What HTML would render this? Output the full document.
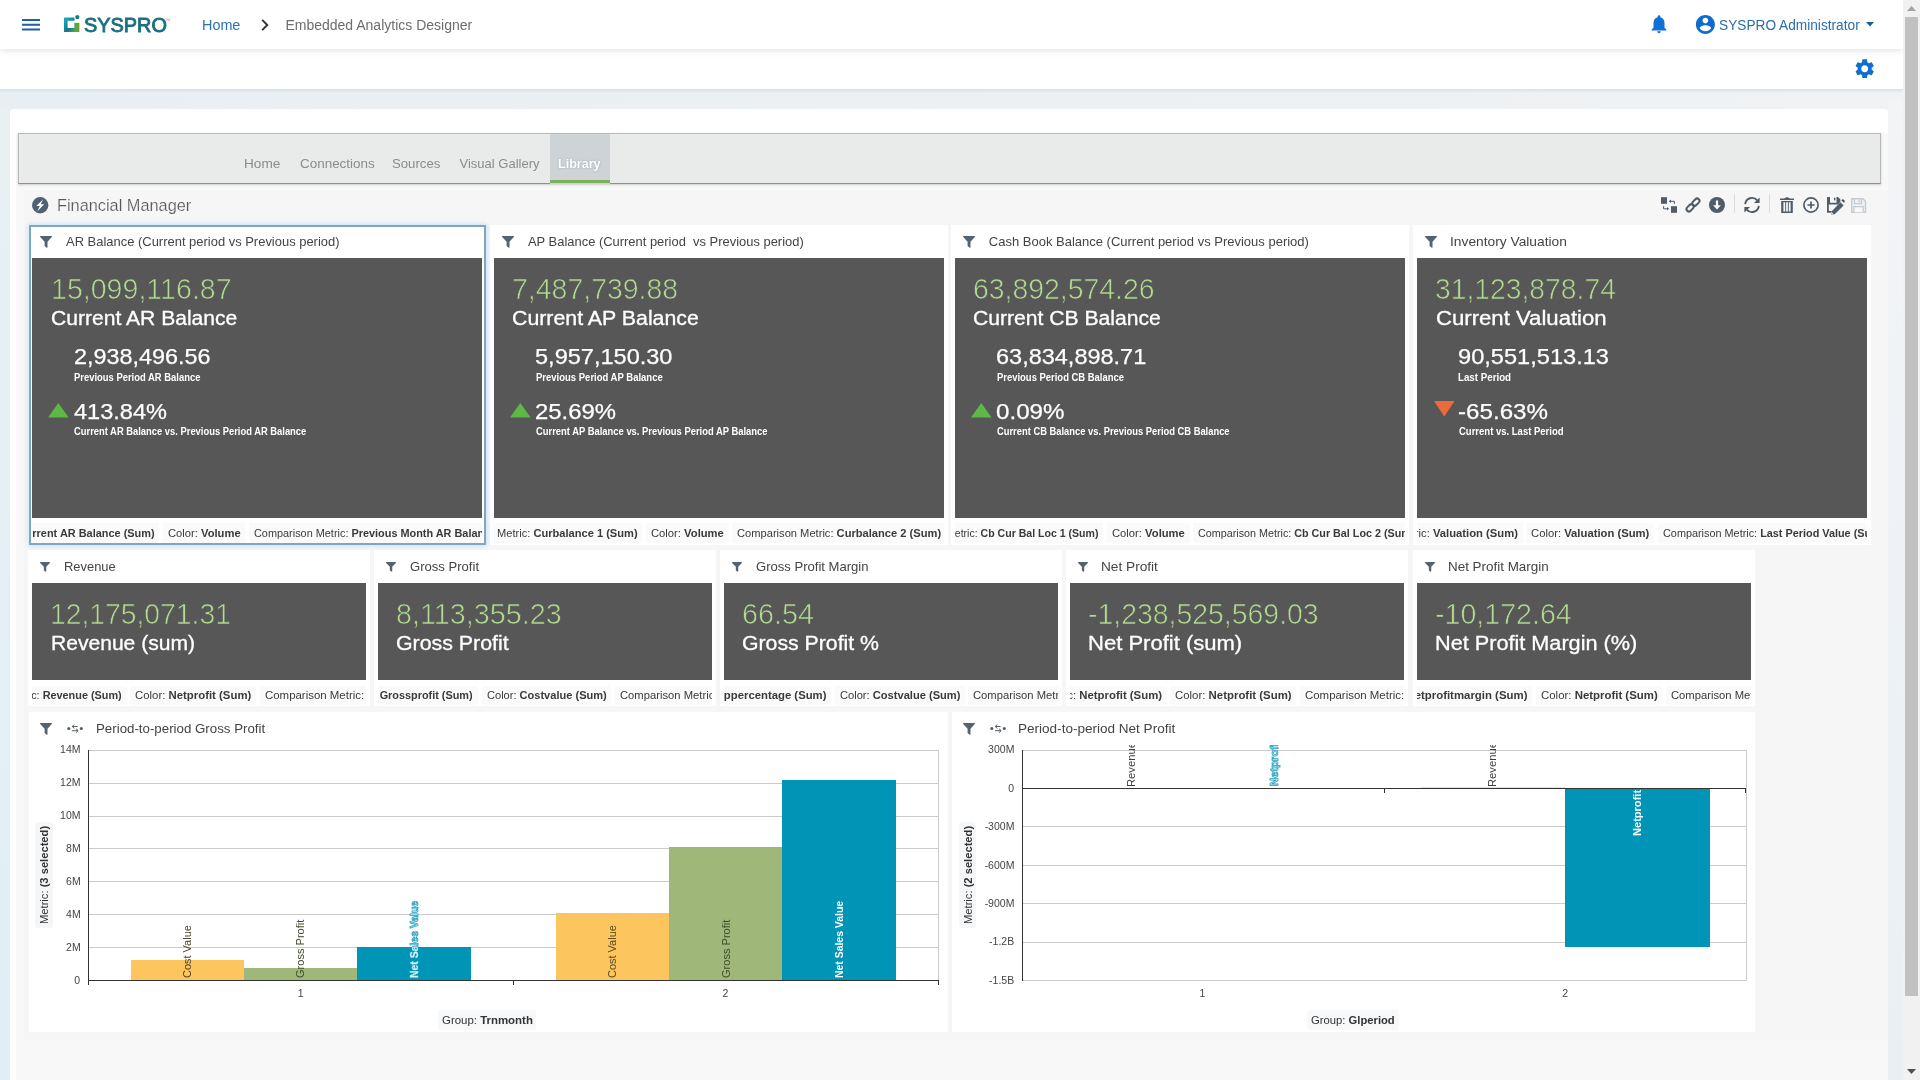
<!DOCTYPE html>
<html><head><meta charset="utf-8"><title>Embedded Analytics Designer</title>
<style>
html,body{margin:0;padding:0}
body{width:1920px;height:1080px;overflow:hidden;position:relative;font-family:"Liberation Sans", sans-serif;background:#e6eff4}
svg{position:absolute;overflow:visible}
</style></head>
<body>
<div style="position:absolute;left:0;top:0;width:1920px;height:1080px;will-change:transform">
<div style="position:absolute;left:0;top:0;width:1903px;height:1080px;background:linear-gradient(180deg,#e8f0f4 0px,#e8f0f4 120px,#e0eff5 1000px)"></div>
<div style="position:absolute;left:0;top:89px;width:1903px;height:21px;background:linear-gradient(90deg,#e8eff4 0,#ecf0f2 900px,#f0f2f4 1903px)"></div>
<div style="position:absolute;left:1888px;top:100px;width:15px;height:980px;background:linear-gradient(180deg,#f2f4f6 0,#f1f3f6 150px,#e9f0f5 980px)"></div>
<div style="position:absolute;left:0px;top:49px;width:1903px;height:40px;background:#ffffff;"></div>
<div style="position:absolute;left:0;top:89px;width:1903px;height:4px;background:linear-gradient(180deg,rgba(120,135,150,0.16),rgba(120,135,150,0))"></div>
<div style="position:absolute;left:0px;top:0px;width:1903px;height:49px;background:#ffffff;box-shadow:0 1px 8px rgba(0,0,0,0.13);"></div>
<div style="position:absolute;left:10px;top:109px;width:1878px;height:980px;background:#ffffff;border-radius:3px;"></div>
<div style="position:absolute;left:16px;top:133px;width:1872px;height:947px;background:#f8f8f8;"></div>
<div style="position:absolute;left:24px;top:190px;width:1864px;height:850px;background:#f6f6f6;"></div>
<div style="position:absolute;left:1903px;top:0px;width:17px;height:1080px;background:#f1f1f1;"></div>
<div style="position:absolute;left:1905px;top:17px;width:13px;height:979px;background:#c1c1c1;"></div>
<svg style="left:1907px;top:6px" width="9" height="5" viewBox="0 0 9 5"><path d="M4.5 0 L9 5 H0 Z" fill="#a3a3a3"/></svg>
<svg style="left:1907px;top:1069px" width="9" height="5" viewBox="0 0 9 5"><path d="M0 0 H9 L4.5 5 Z" fill="#505050"/></svg>
<svg style="left:22px;top:19px" width="18" height="12" viewBox="0 0 18 12"><path d="M0 0h18v2H0zM0 4.7h18v2H0zM0 9.4h18v2H0z" fill="#1f5fa3"/></svg>
<svg style="left:64px;top:15px" width="16" height="17" viewBox="0 0 16 17">
<defs><linearGradient id="lg1" x1="0" y1="0" x2="1" y2="1"><stop offset="0" stop-color="#1fb0c4"/><stop offset="0.55" stop-color="#14788e"/><stop offset="1" stop-color="#7ab83a"/></linearGradient></defs>
<path d="M0 2.5h10.5v3.2H3.6v7.2h7v-5h4.6V17H0z" fill="url(#lg1)"/>
<rect x="10.6" y="7.9" width="4.6" height="9.1" fill="#5fa53c"/>
<rect x="11.5" y="0.3" width="3.7" height="3.7" rx="1" fill="#167a80"/>
</svg>
<span style="position:absolute;white-space:pre;left:84.24px;top:13.82px;font-size:21px;font-weight:400;line-height:1;color:#1b6f80;transform:scaleX(0.9473);transform-origin:0 0;-webkit-text-stroke:0.9px #1b6f80;">SYSPRO</span>
<span style="position:absolute;white-space:pre;left:165.33px;top:18.27px;font-size:5px;font-weight:400;line-height:1;color:#888;">™</span>
<span style="position:absolute;white-space:pre;left:202.09px;top:17.85px;font-size:14px;font-weight:400;line-height:1;color:#2e72ad;transform:scaleX(1.0271);transform-origin:0 0;">Home</span>
<svg style="left:260.5px;top:19px" width="8" height="12" viewBox="0 0 8 12"><path d="M1.2 0.8 L6.3 6 L1.2 11.2" fill="none" stroke="#333" stroke-width="1.9"/></svg>
<span style="position:absolute;white-space:pre;left:285.42px;top:17.85px;font-size:14px;font-weight:400;line-height:1;color:#6e6e6e;">Embedded Analytics Designer</span>
<svg style="left:1647.5px;top:13.2px" width="22" height="22" viewBox="0 0 24 24"><path fill="#1070d6" d="M12 22c1.1 0 2-.9 2-2h-4c0 1.1.89 2 2 2zm6-6v-5c0-3.07-1.64-5.64-4.5-6.32V4c0-.83-.67-1.5-1.5-1.5s-1.5.67-1.5 1.5v.68C7.63 5.36 6 7.92 6 11v5l-2 2v1h16v-1l-2-2z"/></svg>
<svg style="left:1693.6px;top:12.9px" width="22.8" height="22.8" viewBox="0 0 24 24"><path fill="#0f6ccc" d="M12 2C6.48 2 2 6.48 2 12s4.48 10 10 10 10-4.48 10-10S17.52 2 12 2zm0 3c1.66 0 3 1.34 3 3s-1.34 3-3 3-3-1.34-3-3 1.34-3 3-3zm0 14.2c-2.5 0-4.71-1.28-6-3.22.03-1.99 4-3.08 6-3.08 1.99 0 5.97 1.09 6 3.08-1.29 1.94-3.5 3.22-6 3.22z"/></svg>
<span style="position:absolute;white-space:pre;left:1718.57px;top:17.85px;font-size:14px;font-weight:400;line-height:1;color:#2a6daf;transform:scaleX(0.9774);transform-origin:0 0;">SYSPRO Administrator</span>
<svg style="left:1866px;top:22px" width="8" height="4.4" viewBox="0 0 8 4.4"><path d="M0 0H8L4 4.4Z" fill="#1a5c8a"/></svg>
<svg style="left:1852.6px;top:56.7px" width="23.4" height="23.4" viewBox="0 0 24 24"><path fill="#0e6fd0" d="M19.14 12.94c.04-.3.06-.61.06-.94 0-.32-.02-.64-.07-.94l2.03-1.58c.18-.14.23-.41.12-.61l-1.92-3.32c-.12-.22-.37-.29-.59-.22l-2.39.96c-.5-.38-1.03-.7-1.62-.94l-.36-2.54c-.04-.24-.24-.41-.48-.41h-3.84c-.24 0-.43.17-.47.41l-.36 2.54c-.59.24-1.13.57-1.62.94l-2.39-.96c-.22-.08-.47 0-.59.22L2.74 8.87c-.12.21-.08.47.12.61l2.03 1.58c-.05.3-.09.63-.09.94s.02.64.07.94l-2.03 1.58c-.18.14-.23.41-.12.61l1.92 3.32c.12.22.37.29.59.22l2.39-.96c.5.38 1.03.7 1.62.94l.36 2.54c.05.24.24.41.48.41h3.84c.24 0 .44-.17.47-.41l.36-2.54c.59-.24 1.13-.56 1.62-.94l2.39.96c.22.08.47 0 .59-.22l1.92-3.32c.12-.22.07-.47-.12-.61l-2.01-1.58zM12 15.6c-1.98 0-3.6-1.62-3.6-3.6s1.62-3.6 3.6-3.6 3.6 1.62 3.6 3.6-1.62 3.6-3.6 3.6z"/></svg>
<div style="position:absolute;left:18px;top:133px;width:1863px;height:51px;background:#e9eaea;box-sizing:border-box;border:1px solid #b9b9b9;border-bottom:1px solid #8f8f8f;box-shadow:0 1px 2px rgba(0,0,0,0.18);"></div>
<div style="position:absolute;left:549.5px;top:134px;width:60px;height:49.5px;background:#cdd3d7;"></div>
<div style="position:absolute;left:549.5px;top:180px;width:60px;height:3.4px;background:#7fb05c;"></div>
<span style="position:absolute;white-space:pre;left:244.37px;top:156.50px;font-size:13px;font-weight:400;line-height:1;color:#8b8b8b;transform:scaleX(1.0479);transform-origin:0 0;">Home</span>
<span style="position:absolute;white-space:pre;left:299.68px;top:156.50px;font-size:13px;font-weight:400;line-height:1;color:#8b8b8b;transform:scaleX(1.0340);transform-origin:0 0;">Connections</span>
<span style="position:absolute;white-space:pre;left:392.44px;top:156.50px;font-size:13px;font-weight:400;line-height:1;color:#8b8b8b;transform:scaleX(1.0131);transform-origin:0 0;">Sources</span>
<span style="position:absolute;white-space:pre;left:459.52px;top:156.50px;font-size:13px;font-weight:400;line-height:1;color:#8b8b8b;">Visual Gallery</span>
<span style="position:absolute;white-space:pre;left:558.24px;top:156.50px;font-size:13px;font-weight:700;line-height:1;color:#ffffff;transform:scaleX(0.9647);transform-origin:0 0;text-shadow:0 0 2px rgba(120,130,140,0.6);">Library</span>
<svg style="left:31.8px;top:197px" width="16.4" height="16.4" viewBox="0 0 16 16"><circle cx="8" cy="8" r="8" fill="#4f6172"/><path d="M10.9 2.2 L4.3 8.8 H7.6 L5.3 14 L11.9 7.1 H8.6 Z" fill="#fff"/></svg>
<span style="position:absolute;white-space:pre;left:56.85px;top:196.91px;font-size:17px;font-weight:400;line-height:1;color:#585858;transform:scaleX(0.9601);transform-origin:0 0;-webkit-text-stroke:0.2px #f6f6f6;">Financial Manager</span>
<svg style="left:1661px;top:197px" width="16" height="16" viewBox="0 0 16 16">
<rect x="0" y="0.2" width="6" height="6.6" fill="#505c68"/><rect x="10" y="9.2" width="6" height="6.6" fill="#505c68"/>
<path d="M8.2 4.3 H13.3 V7" fill="none" stroke="#505c68" stroke-width="1"/><path d="M10 2.6 L8 4.3 L10 6 Z" fill="#505c68"/>
<path d="M2.6 9.2 V11.8 H6.5" fill="none" stroke="#505c68" stroke-width="1"/><path d="M6 10.1 L8 11.8 L6 13.5 Z" fill="#505c68"/>
</svg>
<svg style="left:1685px;top:197px" width="16" height="16" viewBox="0 0 16 16">
<g fill="none" stroke="#505c68" stroke-width="2" stroke-linecap="round">
<rect x="-2.4" y="-4.1" width="4.8" height="8.2" rx="2.4" transform="translate(10.9 5.1) rotate(45)"/>
<rect x="-2.4" y="-4.1" width="4.8" height="8.2" rx="2.4" transform="translate(5.1 10.9) rotate(45)"/>
</g></svg>
<svg style="left:1709.2px;top:196.9px" width="16" height="16" viewBox="0 0 16 16">
<circle cx="8" cy="8" r="8" fill="#505c68"/><path d="M6.9 3.4 H9.1 V8.2 H11.9 L8 12.6 L4.1 8.2 H6.9 Z" fill="#fff"/></svg>
<div style="position:absolute;left:1734px;top:193.5px;width:1px;height:19.5px;background:#dcdcdc;"></div>
<svg style="left:1744px;top:197px" width="16" height="16" viewBox="0 0 16 16">
<g fill="none" stroke="#505c68" stroke-width="1.9">
<path d="M1.2 7.2 A6.8 6.8 0 0 1 13.2 3.4"/><path d="M14.8 8.8 A6.8 6.8 0 0 1 2.8 12.6"/></g>
<path d="M15.6 0.4 V6 H10 Z" fill="#505c68"/><path d="M0.4 15.6 V10 H6 Z" fill="#505c68"/></svg>
<div style="position:absolute;left:1769px;top:193.5px;width:1px;height:19.5px;background:#dcdcdc;"></div>
<svg style="left:1780px;top:196.9px" width="14" height="16" viewBox="0 0 14 16">
<path d="M4.6 0.9 Q7 -0.4 9.4 0.9 V1.5 H14 V3 H0 V1.5 H4.6 Z" fill="#505c68"/>
<path d="M1.2 4 H12.8 V16 H1.2 Z M3.4 5.2 V14.4 H5.2 V5.2 Z M6.1 5.2 V14.4 H7.9 V5.2 Z M8.8 5.2 V14.4 H10.6 V5.2 Z" fill="#505c68" fill-rule="evenodd"/></svg>
<svg style="left:1803px;top:196.9px" width="16" height="16" viewBox="0 0 16 16">
<circle cx="8" cy="8" r="7.1" fill="none" stroke="#505c68" stroke-width="1.7"/><path d="M4.4 8 H11.6 M8 4.4 V11.6" stroke="#505c68" stroke-width="1.7"/></svg>
<svg style="left:1827.2px;top:197px" width="18" height="18" viewBox="0 0 18 18">
<path d="M0 0 H3 V5.8 H9.5 V0 H11 L13.3 2.3 V5 L11.6 6.7 V7.4 H1.8 V14 H5.2 L3.8 15.7 H0 Z" fill="#505c68"/>
<rect x="7" y="0.8" width="1.4" height="2.6" fill="#505c68"/>
<path d="M13.4 5.2 L16.6 8.4 L8 17 L4.2 18 L5 14 Z" fill="#505c68"/><path d="M14.2 3.6 L15.2 2.6 Q15.9 2 16.6 2.6 L17.6 3.6 Q18.2 4.4 17.6 5.1 L16.9 5.8 Z" fill="#505c68"/>
<path d="M4.4 17.8 L4.9 15.6 L6.5 17.2 Z" fill="#fff"/></svg>
<svg style="left:1851.2px;top:197.6px" width="15.2" height="15" viewBox="0 0 15.2 15">
<path d="M0.7 0.7 H11.9 L14.5 3.3 V14.3 H0.7 Z" fill="#eff1f3" stroke="#c6cbd0" stroke-width="1.4"/>
<path d="M3.4 0.7 V5.6 H10.6 V0.7" fill="none" stroke="#c6cbd0" stroke-width="1.2"/>
<rect x="7.6" y="1.6" width="1.6" height="2.6" fill="#c6cbd0"/>
<path d="M2.9 14.3 V8.6 H12.3 V14.3" fill="#f6f7f8" stroke="#c6cbd0" stroke-width="1.2"/></svg>
<div style="position:absolute;left:27.700000000000003px;top:225px;width:458.2px;height:319.5px;background:#ffffff;"></div>
<div style="position:absolute;left:29px;top:225px;width:457px;height:319.5px;background:#ffffff;box-sizing:border-box;border:2px solid #7ea8c1;box-shadow:0 0 4px 1px rgba(170,210,245,0.6);"></div>
<div style="position:absolute;left:32.1px;top:258px;width:449.5px;height:259.6px;background:#575757;"></div>
<svg style="left:40.0px;top:235.8px" width="12" height="12" viewBox="0 0 12 12"><path d="M0.4 0 H11.6 Q12.3 0.5 11.8 1.1 L7.5 5.8 V10.9 Q7.3 12.2 6.4 11.5 L4.6 10.1 V5.8 L0.2 1.1 Q-0.3 0.5 0.4 0 Z" fill="#546370"/></svg>
<span style="position:absolute;white-space:pre;left:66.05px;top:234.80px;font-size:13px;font-weight:400;line-height:1;color:#444;transform:scaleX(0.9962);transform-origin:0 0;">AR Balance (Current period vs Previous period)</span>
<span style="position:absolute;white-space:pre;left:50.56px;top:273.61px;font-size:30px;font-weight:400;line-height:1;color:#b1db90;transform:scaleX(0.9526);transform-origin:0 0;-webkit-text-stroke:0.7px #575757;">15,099,116.87</span>
<span style="position:absolute;white-space:pre;left:50.63px;top:309.09px;font-size:19.5px;font-weight:400;line-height:1;color:#fff;transform:scaleX(1.0811);transform-origin:0 0;-webkit-text-stroke:0.3px #fff;">Current AR Balance</span>
<span style="position:absolute;white-space:pre;left:73.60px;top:346.47px;font-size:22.6px;font-weight:400;line-height:1;color:#fff;transform:scaleX(1.0356);transform-origin:0 0;-webkit-text-stroke:0.25px #fff;">2,938,496.56</span>
<span style="position:absolute;white-space:pre;left:73.96px;top:373.14px;font-size:10px;font-weight:700;line-height:1;color:#fff;transform:scaleX(0.9424);transform-origin:0 0;">Previous Period AR Balance</span>
<span style="position:absolute;white-space:pre;left:74.25px;top:400.67px;font-size:22.6px;font-weight:400;line-height:1;color:#fff;transform:scaleX(1.0426);transform-origin:0 0;-webkit-text-stroke:0.25px #fff;">413.84%</span>
<span style="position:absolute;white-space:pre;left:74.15px;top:427.24px;font-size:10px;font-weight:700;line-height:1;color:#fff;transform:scaleX(0.9378);transform-origin:0 0;">Current AR Balance vs. Previous Period AR Balance</span>
<svg style="left:48.1px;top:402.5px" width="20.6" height="14.4" viewBox="0 0 20.6 14.4"><path d="M10.3 0 L20.6 14.4 H0 Z" fill="#5db846"/></svg>
<div style="position:absolute;left:489.70000000000005px;top:225px;width:458.2px;height:319.5px;background:#ffffff;"></div>
<div style="position:absolute;left:494.1px;top:258px;width:449.5px;height:259.6px;background:#575757;"></div>
<svg style="left:502.0px;top:235.8px" width="12" height="12" viewBox="0 0 12 12"><path d="M0.4 0 H11.6 Q12.3 0.5 11.8 1.1 L7.5 5.8 V10.9 Q7.3 12.2 6.4 11.5 L4.6 10.1 V5.8 L0.2 1.1 Q-0.3 0.5 0.4 0 Z" fill="#546370"/></svg>
<span style="position:absolute;white-space:pre;left:528.05px;top:234.80px;font-size:13px;font-weight:400;line-height:1;color:#444;transform:scaleX(0.9945);transform-origin:0 0;">AP Balance (Current period  vs Previous period)</span>
<span style="position:absolute;white-space:pre;left:512.14px;top:273.61px;font-size:30px;font-weight:400;line-height:1;color:#b1db90;transform:scaleX(0.9487);transform-origin:0 0;-webkit-text-stroke:0.7px #575757;">7,487,739.88</span>
<span style="position:absolute;white-space:pre;left:512.07px;top:309.09px;font-size:19.5px;font-weight:400;line-height:1;color:#fff;transform:scaleX(1.0932);transform-origin:0 0;-webkit-text-stroke:0.3px #fff;">Current AP Balance</span>
<span style="position:absolute;white-space:pre;left:535.23px;top:346.47px;font-size:22.6px;font-weight:400;line-height:1;color:#fff;transform:scaleX(1.0419);transform-origin:0 0;-webkit-text-stroke:0.25px #fff;">5,957,150.30</span>
<span style="position:absolute;white-space:pre;left:535.76px;top:373.14px;font-size:10px;font-weight:700;line-height:1;color:#fff;transform:scaleX(0.9500);transform-origin:0 0;">Previous Period AP Balance</span>
<span style="position:absolute;white-space:pre;left:535.37px;top:400.67px;font-size:22.6px;font-weight:400;line-height:1;color:#fff;transform:scaleX(1.0570);transform-origin:0 0;-webkit-text-stroke:0.25px #fff;">25.69%</span>
<span style="position:absolute;white-space:pre;left:535.95px;top:427.24px;font-size:10px;font-weight:700;line-height:1;color:#fff;transform:scaleX(0.9401);transform-origin:0 0;">Current AP Balance vs. Previous Period AP Balance</span>
<svg style="left:510.1px;top:402.5px" width="20.6" height="14.4" viewBox="0 0 20.6 14.4"><path d="M10.3 0 L20.6 14.4 H0 Z" fill="#5db846"/></svg>
<div style="position:absolute;left:950.8000000000001px;top:225px;width:458.2px;height:319.5px;background:#ffffff;"></div>
<div style="position:absolute;left:955.2px;top:258px;width:449.5px;height:259.6px;background:#575757;"></div>
<svg style="left:963.1px;top:235.8px" width="12" height="12" viewBox="0 0 12 12"><path d="M0.4 0 H11.6 Q12.3 0.5 11.8 1.1 L7.5 5.8 V10.9 Q7.3 12.2 6.4 11.5 L4.6 10.1 V5.8 L0.2 1.1 Q-0.3 0.5 0.4 0 Z" fill="#546370"/></svg>
<span style="position:absolute;white-space:pre;left:988.80px;top:234.80px;font-size:13px;font-weight:400;line-height:1;color:#444;">Cash Book Balance (Current period vs Previous period)</span>
<span style="position:absolute;white-space:pre;left:973.02px;top:273.61px;font-size:30px;font-weight:400;line-height:1;color:#b1db90;transform:scaleX(0.9461);transform-origin:0 0;-webkit-text-stroke:0.7px #575757;">63,892,574.26</span>
<span style="position:absolute;white-space:pre;left:973.38px;top:309.09px;font-size:19.5px;font-weight:400;line-height:1;color:#fff;transform:scaleX(1.0824);transform-origin:0 0;-webkit-text-stroke:0.3px #fff;">Current CB Balance</span>
<span style="position:absolute;white-space:pre;left:996.25px;top:346.47px;font-size:22.6px;font-weight:400;line-height:1;color:#fff;transform:scaleX(1.0397);transform-origin:0 0;-webkit-text-stroke:0.25px #fff;">63,834,898.71</span>
<span style="position:absolute;white-space:pre;left:996.66px;top:373.14px;font-size:10px;font-weight:700;line-height:1;color:#fff;transform:scaleX(0.9443);transform-origin:0 0;">Previous Period CB Balance</span>
<span style="position:absolute;white-space:pre;left:996.43px;top:400.67px;font-size:22.6px;font-weight:400;line-height:1;color:#fff;transform:scaleX(1.0694);transform-origin:0 0;-webkit-text-stroke:0.25px #fff;">0.09%</span>
<span style="position:absolute;white-space:pre;left:996.85px;top:427.24px;font-size:10px;font-weight:700;line-height:1;color:#fff;transform:scaleX(0.9361);transform-origin:0 0;">Current CB Balance vs. Previous Period CB Balance</span>
<svg style="left:971.2px;top:402.5px" width="20.6" height="14.4" viewBox="0 0 20.6 14.4"><path d="M10.3 0 L20.6 14.4 H0 Z" fill="#5db846"/></svg>
<div style="position:absolute;left:1412.6px;top:225px;width:458.2px;height:319.5px;background:#ffffff;"></div>
<div style="position:absolute;left:1417.0px;top:258px;width:449.5px;height:259.6px;background:#575757;"></div>
<svg style="left:1424.9px;top:235.8px" width="12" height="12" viewBox="0 0 12 12"><path d="M0.4 0 H11.6 Q12.3 0.5 11.8 1.1 L7.5 5.8 V10.9 Q7.3 12.2 6.4 11.5 L4.6 10.1 V5.8 L0.2 1.1 Q-0.3 0.5 0.4 0 Z" fill="#546370"/></svg>
<span style="position:absolute;white-space:pre;left:1450.00px;top:234.80px;font-size:13px;font-weight:400;line-height:1;color:#444;transform:scaleX(1.0596);transform-origin:0 0;">Inventory Valuation</span>
<span style="position:absolute;white-space:pre;left:1435.32px;top:273.61px;font-size:30px;font-weight:400;line-height:1;color:#b1db90;transform:scaleX(0.9428);transform-origin:0 0;-webkit-text-stroke:0.7px #575757;">31,123,878.74</span>
<span style="position:absolute;white-space:pre;left:1435.52px;top:309.09px;font-size:19.5px;font-weight:400;line-height:1;color:#fff;transform:scaleX(1.1354);transform-origin:0 0;-webkit-text-stroke:0.3px #fff;">Current Valuation</span>
<span style="position:absolute;white-space:pre;left:1458.11px;top:346.47px;font-size:22.6px;font-weight:400;line-height:1;color:#fff;transform:scaleX(1.0451);transform-origin:0 0;-webkit-text-stroke:0.25px #fff;">90,551,513.13</span>
<span style="position:absolute;white-space:pre;left:1458.44px;top:373.14px;font-size:10px;font-weight:700;line-height:1;color:#fff;transform:scaleX(0.9740);transform-origin:0 0;">Last Period</span>
<span style="position:absolute;white-space:pre;left:1458.23px;top:400.67px;font-size:22.6px;font-weight:400;line-height:1;color:#fff;transform:scaleX(1.0695);transform-origin:0 0;-webkit-text-stroke:0.25px #fff;">-65.63%</span>
<span style="position:absolute;white-space:pre;left:1458.65px;top:427.24px;font-size:10px;font-weight:700;line-height:1;color:#fff;transform:scaleX(0.9501);transform-origin:0 0;">Current vs. Last Period</span>
<svg style="left:1433.75px;top:400.6px" width="20.6" height="15.4" viewBox="0 0 20.6 15.4"><path d="M0 0 H20.6 L10.3 15.4 Z" fill="#ee6a3c"/></svg>
<div style="position:absolute;left:32.1px;top:522.9px;width:449.5px;height:22px;overflow:hidden">
<div style="position:absolute;left:-55.5px;top:0.5px;width:182.9px;height:19.5px;background:#fafafa;border-radius:2px"></div>
<span style="position:absolute;white-space:pre;left:-50.21px;top:4.69px;font-size:11px;font-weight:400;line-height:1;color:#3a3a3a;transform:scaleX(0.9930);transform-origin:0 0;">Metric: <b>Current AR Balance (Sum)</b></span>
<div style="position:absolute;left:130.8px;top:0.5px;width:82.6px;height:19.5px;background:#fafafa;border-radius:2px"></div>
<span style="position:absolute;white-space:pre;left:135.67px;top:4.69px;font-size:11px;font-weight:400;line-height:1;color:#3a3a3a;transform:scaleX(1.0187);transform-origin:0 0;">Color: <b>Volume</b></span>
<div style="position:absolute;left:217.0px;top:0.5px;width:288.0px;height:19.5px;background:#fafafa;border-radius:2px"></div>
<span style="position:absolute;white-space:pre;left:221.89px;top:4.69px;font-size:11px;font-weight:400;line-height:1;color:#3a3a3a;transform:scaleX(0.9900);transform-origin:0 0;">Comparison Metric: <b>Previous Month AR Balance (Sum)</b></span>
</div>
<div style="position:absolute;left:494.1px;top:522.9px;width:449.5px;height:22px;overflow:hidden">
<div style="position:absolute;left:-1.9px;top:0.5px;width:150.0px;height:19.5px;background:#fafafa;border-radius:2px"></div>
<span style="position:absolute;white-space:pre;left:2.59px;top:4.69px;font-size:11px;font-weight:400;line-height:1;color:#3a3a3a;transform:scaleX(1.0087);transform-origin:0 0;">Metric: <b>Curbalance 1 (Sum)</b></span>
<div style="position:absolute;left:152.1px;top:0.5px;width:82.8px;height:19.5px;background:#fafafa;border-radius:2px"></div>
<span style="position:absolute;white-space:pre;left:156.97px;top:4.69px;font-size:11px;font-weight:400;line-height:1;color:#3a3a3a;transform:scaleX(1.0216);transform-origin:0 0;">Color: <b>Volume</b></span>
<div style="position:absolute;left:238.0px;top:0.5px;width:213.8px;height:19.5px;background:#fafafa;border-radius:2px"></div>
<span style="position:absolute;white-space:pre;left:242.88px;top:4.69px;font-size:11px;font-weight:400;line-height:1;color:#3a3a3a;transform:scaleX(1.0121);transform-origin:0 0;">Comparison Metric: <b>Curbalance 2 (Sum)</b></span>
</div>
<div style="position:absolute;left:955.2px;top:522.9px;width:449.5px;height:22px;overflow:hidden">
<div style="position:absolute;left:-55.5px;top:0.5px;width:203.8px;height:19.5px;background:#fafafa;border-radius:2px"></div>
<span style="position:absolute;white-space:pre;left:-9.03px;top:4.69px;font-size:11px;font-weight:400;line-height:1;color:#3a3a3a;transform:scaleX(0.9590);transform-origin:0 0;">Metric: <b>Cb Cur Bal Loc 1 (Sum)</b></span>
<div style="position:absolute;left:151.9px;top:0.5px;width:82.8px;height:19.5px;background:#fafafa;border-radius:2px"></div>
<span style="position:absolute;white-space:pre;left:156.77px;top:4.69px;font-size:11px;font-weight:400;line-height:1;color:#3a3a3a;transform:scaleX(1.0216);transform-origin:0 0;">Color: <b>Volume</b></span>
<div style="position:absolute;left:238.1px;top:0.5px;width:266.9px;height:19.5px;background:#fafafa;border-radius:2px"></div>
<span style="position:absolute;white-space:pre;left:243.00px;top:4.69px;font-size:11px;font-weight:400;line-height:1;color:#3a3a3a;transform:scaleX(0.9780);transform-origin:0 0;">Comparison Metric: <b>Cb Cur Bal Loc 2 (Sum)</b></span>
</div>
<div style="position:absolute;left:1417.0px;top:522.9px;width:449.5px;height:22px;overflow:hidden">
<div style="position:absolute;left:-55.5px;top:0.5px;width:161.0px;height:19.5px;background:#fafafa;border-radius:2px"></div>
<span style="position:absolute;white-space:pre;left:-21.29px;top:4.69px;font-size:11px;font-weight:400;line-height:1;color:#3a3a3a;transform:scaleX(1.0230);transform-origin:0 0;">Metric: <b>Valuation (Sum)</b></span>
<div style="position:absolute;left:108.9px;top:0.5px;width:128.0px;height:19.5px;background:#fafafa;border-radius:2px"></div>
<span style="position:absolute;white-space:pre;left:113.77px;top:4.69px;font-size:11px;font-weight:400;line-height:1;color:#3a3a3a;transform:scaleX(1.0246);transform-origin:0 0;">Color: <b>Valuation (Sum)</b></span>
<div style="position:absolute;left:240.9px;top:0.5px;width:264.1px;height:19.5px;background:#fafafa;border-radius:2px"></div>
<span style="position:absolute;white-space:pre;left:245.79px;top:4.69px;font-size:11px;font-weight:400;line-height:1;color:#3a3a3a;transform:scaleX(0.9870);transform-origin:0 0;">Comparison Metric: <b>Last Period Value (Sum)</b></span>
</div>
<div style="position:absolute;left:27.700000000000003px;top:550px;width:342.2px;height:156px;background:#ffffff;"></div>
<div style="position:absolute;left:32.1px;top:583.2px;width:333.9px;height:96.6px;background:#575757;"></div>
<svg style="left:40.0px;top:562px" width="10" height="10" viewBox="0 0 12 12"><path d="M0.4 0 H11.6 Q12.3 0.5 11.8 1.1 L7.5 5.8 V10.9 Q7.3 12.2 6.4 11.5 L4.6 10.1 V5.8 L0.2 1.1 Q-0.3 0.5 0.4 0 Z" fill="#546370"/></svg>
<span style="position:absolute;white-space:pre;left:63.53px;top:559.60px;font-size:13px;font-weight:400;line-height:1;color:#444;transform:scaleX(0.9944);transform-origin:0 0;">Revenue</span>
<span style="position:absolute;white-space:pre;left:50.03px;top:598.50px;font-size:30px;font-weight:400;line-height:1;color:#b1db90;transform:scaleX(0.9428);transform-origin:0 0;-webkit-text-stroke:0.7px #575757;">12,175,071.31</span>
<span style="position:absolute;white-space:pre;left:50.57px;top:634.29px;font-size:19.5px;font-weight:400;line-height:1;color:#fff;transform:scaleX(1.0805);transform-origin:0 0;-webkit-text-stroke:0.3px #fff;">Revenue (sum)</span>
<div style="position:absolute;left:373.6px;top:550px;width:342.2px;height:156px;background:#ffffff;"></div>
<div style="position:absolute;left:378.0px;top:583.2px;width:333.9px;height:96.6px;background:#575757;"></div>
<svg style="left:385.9px;top:562px" width="10" height="10" viewBox="0 0 12 12"><path d="M0.4 0 H11.6 Q12.3 0.5 11.8 1.1 L7.5 5.8 V10.9 Q7.3 12.2 6.4 11.5 L4.6 10.1 V5.8 L0.2 1.1 Q-0.3 0.5 0.4 0 Z" fill="#546370"/></svg>
<span style="position:absolute;white-space:pre;left:409.80px;top:559.60px;font-size:13px;font-weight:400;line-height:1;color:#444;transform:scaleX(1.0058);transform-origin:0 0;">Gross Profit</span>
<span style="position:absolute;white-space:pre;left:395.96px;top:598.50px;font-size:30px;font-weight:400;line-height:1;color:#b1db90;transform:scaleX(0.9582);transform-origin:0 0;-webkit-text-stroke:0.7px #575757;">8,113,355.23</span>
<span style="position:absolute;white-space:pre;left:396.17px;top:634.29px;font-size:19.5px;font-weight:400;line-height:1;color:#fff;transform:scaleX(1.0943);transform-origin:0 0;-webkit-text-stroke:0.3px #fff;">Gross Profit</span>
<div style="position:absolute;left:719.6px;top:550px;width:342.2px;height:156px;background:#ffffff;"></div>
<div style="position:absolute;left:724.0px;top:583.2px;width:333.9px;height:96.6px;background:#575757;"></div>
<svg style="left:731.9px;top:562px" width="10" height="10" viewBox="0 0 12 12"><path d="M0.4 0 H11.6 Q12.3 0.5 11.8 1.1 L7.5 5.8 V10.9 Q7.3 12.2 6.4 11.5 L4.6 10.1 V5.8 L0.2 1.1 Q-0.3 0.5 0.4 0 Z" fill="#546370"/></svg>
<span style="position:absolute;white-space:pre;left:755.60px;top:559.60px;font-size:13px;font-weight:400;line-height:1;color:#444;transform:scaleX(1.0045);transform-origin:0 0;">Gross Profit Margin</span>
<span style="position:absolute;white-space:pre;left:742.00px;top:598.50px;font-size:30px;font-weight:400;line-height:1;color:#b1db90;transform:scaleX(0.9582);transform-origin:0 0;-webkit-text-stroke:0.7px #575757;">66.54</span>
<span style="position:absolute;white-space:pre;left:742.37px;top:634.29px;font-size:19.5px;font-weight:400;line-height:1;color:#fff;transform:scaleX(1.0896);transform-origin:0 0;-webkit-text-stroke:0.3px #fff;">Gross Profit %</span>
<div style="position:absolute;left:1065.6px;top:550px;width:342.2px;height:156px;background:#ffffff;"></div>
<div style="position:absolute;left:1070.0px;top:583.2px;width:333.9px;height:96.6px;background:#575757;"></div>
<svg style="left:1077.9px;top:562px" width="10" height="10" viewBox="0 0 12 12"><path d="M0.4 0 H11.6 Q12.3 0.5 11.8 1.1 L7.5 5.8 V10.9 Q7.3 12.2 6.4 11.5 L4.6 10.1 V5.8 L0.2 1.1 Q-0.3 0.5 0.4 0 Z" fill="#546370"/></svg>
<span style="position:absolute;white-space:pre;left:1101.47px;top:559.60px;font-size:13px;font-weight:400;line-height:1;color:#444;transform:scaleX(1.0499);transform-origin:0 0;">Net Profit</span>
<span style="position:absolute;white-space:pre;left:1087.82px;top:598.50px;font-size:30px;font-weight:400;line-height:1;color:#b1db90;transform:scaleX(0.9470);transform-origin:0 0;-webkit-text-stroke:0.7px #575757;">-1,238,525,569.03</span>
<span style="position:absolute;white-space:pre;left:1087.69px;top:634.29px;font-size:19.5px;font-weight:400;line-height:1;color:#fff;transform:scaleX(1.1290);transform-origin:0 0;-webkit-text-stroke:0.3px #fff;">Net Profit (sum)</span>
<div style="position:absolute;left:1412.6px;top:550px;width:342.2px;height:156px;background:#ffffff;"></div>
<div style="position:absolute;left:1417.0px;top:583.2px;width:333.9px;height:96.6px;background:#575757;"></div>
<svg style="left:1424.9px;top:562px" width="10" height="10" viewBox="0 0 12 12"><path d="M0.4 0 H11.6 Q12.3 0.5 11.8 1.1 L7.5 5.8 V10.9 Q7.3 12.2 6.4 11.5 L4.6 10.1 V5.8 L0.2 1.1 Q-0.3 0.5 0.4 0 Z" fill="#546370"/></svg>
<span style="position:absolute;white-space:pre;left:1448.49px;top:559.60px;font-size:13px;font-weight:400;line-height:1;color:#444;transform:scaleX(1.0319);transform-origin:0 0;">Net Profit Margin</span>
<span style="position:absolute;white-space:pre;left:1435.31px;top:598.50px;font-size:30px;font-weight:400;line-height:1;color:#b1db90;transform:scaleX(0.9532);transform-origin:0 0;-webkit-text-stroke:0.7px #575757;">-10,172.64</span>
<span style="position:absolute;white-space:pre;left:1434.82px;top:634.29px;font-size:19.5px;font-weight:400;line-height:1;color:#fff;transform:scaleX(1.1109);transform-origin:0 0;-webkit-text-stroke:0.3px #fff;">Net Profit Margin (%)</span>
<div style="position:absolute;left:32.1px;top:685.4px;width:333.9px;height:22px;overflow:hidden">
<div style="position:absolute;left:-55.5px;top:0.5px;width:150.2px;height:19.5px;background:#fafafa;border-radius:2px"></div>
<span style="position:absolute;white-space:pre;left:-25.03px;top:4.69px;font-size:11px;font-weight:400;line-height:1;color:#3a3a3a;transform:scaleX(0.9880);transform-origin:0 0;">Metric: <b>Revenue (Sum)</b></span>
<div style="position:absolute;left:98.3px;top:0.5px;width:126.0px;height:19.5px;background:#fafafa;border-radius:2px"></div>
<span style="position:absolute;white-space:pre;left:103.16px;top:4.69px;font-size:11px;font-weight:400;line-height:1;color:#3a3a3a;transform:scaleX(1.0342);transform-origin:0 0;">Color: <b>Netprofit (Sum)</b></span>
<div style="position:absolute;left:227.7px;top:0.5px;width:108.4px;height:19.5px;background:#fafafa;border-radius:2px"></div>
<span style="position:absolute;white-space:pre;left:232.56px;top:4.69px;font-size:11px;font-weight:400;line-height:1;color:#3a3a3a;transform:scaleX(1.0397);transform-origin:0 0;">Comparison Metric:</span>
</div>
<div style="position:absolute;left:378.0px;top:685.4px;width:333.9px;height:22px;overflow:hidden">
<div style="position:absolute;left:-55.5px;top:0.5px;width:155.0px;height:19.5px;background:#fafafa;border-radius:2px"></div>
<span style="position:absolute;white-space:pre;left:-34.01px;top:4.69px;font-size:11px;font-weight:400;line-height:1;color:#3a3a3a;transform:scaleX(0.9880);transform-origin:0 0;">Metric: <b>Grossprofit (Sum)</b></span>
<div style="position:absolute;left:103.9px;top:0.5px;width:129.5px;height:19.5px;background:#fafafa;border-radius:2px"></div>
<span style="position:absolute;white-space:pre;left:108.78px;top:4.69px;font-size:11px;font-weight:400;line-height:1;color:#3a3a3a;transform:scaleX(1.0047);transform-origin:0 0;">Color: <b>Costvalue (Sum)</b></span>
<div style="position:absolute;left:237.3px;top:0.5px;width:152.1px;height:19.5px;background:#fafafa;border-radius:2px"></div>
<span style="position:absolute;white-space:pre;left:242.17px;top:4.69px;font-size:11px;font-weight:400;line-height:1;color:#3a3a3a;transform:scaleX(1.0214);transform-origin:0 0;">Comparison Metric:</span>
</div>
<div style="position:absolute;left:724.0px;top:685.4px;width:333.9000000000001px;height:22px;overflow:hidden">
<div style="position:absolute;left:-55.5px;top:0.5px;width:162.9px;height:19.5px;background:#fafafa;border-radius:2px"></div>
<span style="position:absolute;white-space:pre;left:-98.95px;top:4.69px;font-size:11px;font-weight:400;line-height:1;color:#3a3a3a;transform:scaleX(1.0300);transform-origin:0 0;">Metric: <b>Grossprofitppercentage (Sum)</b></span>
<div style="position:absolute;left:110.7px;top:0.5px;width:130.2px;height:19.5px;background:#fafafa;border-radius:2px"></div>
<span style="position:absolute;white-space:pre;left:115.58px;top:4.69px;font-size:11px;font-weight:400;line-height:1;color:#3a3a3a;transform:scaleX(1.0106);transform-origin:0 0;">Color: <b>Costvalue (Sum)</b></span>
<div style="position:absolute;left:244.1px;top:0.5px;width:145.3px;height:19.5px;background:#fafafa;border-radius:2px"></div>
<span style="position:absolute;white-space:pre;left:248.97px;top:4.69px;font-size:11px;font-weight:400;line-height:1;color:#3a3a3a;transform:scaleX(1.0214);transform-origin:0 0;">Comparison Metric:</span>
</div>
<div style="position:absolute;left:1070.0px;top:685.4px;width:333.9000000000001px;height:22px;overflow:hidden">
<div style="position:absolute;left:-55.5px;top:0.5px;width:152.0px;height:19.5px;background:#fafafa;border-radius:2px"></div>
<span style="position:absolute;white-space:pre;left:-28.49px;top:4.69px;font-size:11px;font-weight:400;line-height:1;color:#3a3a3a;transform:scaleX(1.0340);transform-origin:0 0;">Metric: <b>Netprofit (Sum)</b></span>
<div style="position:absolute;left:100.0px;top:0.5px;width:126.3px;height:19.5px;background:#fafafa;border-radius:2px"></div>
<span style="position:absolute;white-space:pre;left:104.86px;top:4.69px;font-size:11px;font-weight:400;line-height:1;color:#3a3a3a;transform:scaleX(1.0369);transform-origin:0 0;">Color: <b>Netprofit (Sum)</b></span>
<div style="position:absolute;left:229.8px;top:0.5px;width:108.4px;height:19.5px;background:#fafafa;border-radius:2px"></div>
<span style="position:absolute;white-space:pre;left:234.66px;top:4.69px;font-size:11px;font-weight:400;line-height:1;color:#3a3a3a;transform:scaleX(1.0397);transform-origin:0 0;">Comparison Metric:</span>
</div>
<div style="position:absolute;left:1417.0px;top:685.4px;width:333.9000000000001px;height:22px;overflow:hidden">
<div style="position:absolute;left:-55.5px;top:0.5px;width:170.8px;height:19.5px;background:#fafafa;border-radius:2px"></div>
<span style="position:absolute;white-space:pre;left:-47.82px;top:4.69px;font-size:11px;font-weight:400;line-height:1;color:#3a3a3a;transform:scaleX(1.0370);transform-origin:0 0;">Metric: <b>Netprofitmargin (Sum)</b></span>
<div style="position:absolute;left:118.9px;top:0.5px;width:126.4px;height:19.5px;background:#fafafa;border-radius:2px"></div>
<span style="position:absolute;white-space:pre;left:123.76px;top:4.69px;font-size:11px;font-weight:400;line-height:1;color:#3a3a3a;transform:scaleX(1.0378);transform-origin:0 0;">Color: <b>Netprofit (Sum)</b></span>
<div style="position:absolute;left:249.2px;top:0.5px;width:140.2px;height:19.5px;background:#fafafa;border-radius:2px"></div>
<span style="position:absolute;white-space:pre;left:254.07px;top:4.69px;font-size:11px;font-weight:400;line-height:1;color:#3a3a3a;transform:scaleX(1.0214);transform-origin:0 0;">Comparison Metric:</span>
</div>
<div style="position:absolute;left:28.5px;top:712px;width:919px;height:319.5px;background:#ffffff;"></div>
<svg style="left:40px;top:722.8px" width="12" height="12" viewBox="0 0 12 12"><path d="M0.4 0 H11.6 Q12.3 0.5 11.8 1.1 L7.5 5.8 V10.9 Q7.3 12.2 6.4 11.5 L4.6 10.1 V5.8 L0.2 1.1 Q-0.3 0.5 0.4 0 Z" fill="#546370"/></svg>
<svg style="left:67px;top:724.4px" width="16" height="9" viewBox="0 0 16 9">
<circle cx="1.8" cy="4.5" r="1.55" fill="#555c63"/><circle cx="14.3" cy="4.5" r="1.55" fill="#555c63"/>
<path d="M5.4 2.5 H10.6 M7.3 0.6 L5.2 2.5 L7.3 4.4" stroke="#555c63" stroke-width="1" fill="none"/>
<path d="M5 6.7 H11 M9.1 4.8 L11.2 6.7 L9.1 8.6" stroke="#555c63" stroke-width="1" fill="none"/>
</svg>
<span style="position:absolute;white-space:pre;left:95.80px;top:721.50px;font-size:13px;font-weight:400;line-height:1;color:#444;transform:scaleX(1.0224);transform-origin:0 0;">Period-to-period Gross Profit</span>
<span style="position:absolute;white-space:pre;left:74.33px;top:974.61px;font-size:10.5px;font-weight:400;line-height:1;color:#444;">0</span>
<div style="position:absolute;left:88.5px;top:947px;width:850.0px;height:1px;background:#cbcbcb;"></div>
<span style="position:absolute;white-space:pre;left:66.07px;top:941.73px;font-size:10.5px;font-weight:400;line-height:1;color:#444;">2M</span>
<div style="position:absolute;left:88.5px;top:914px;width:850.0px;height:1px;background:#cbcbcb;"></div>
<span style="position:absolute;white-space:pre;left:66.07px;top:908.85px;font-size:10.5px;font-weight:400;line-height:1;color:#444;">4M</span>
<div style="position:absolute;left:88.5px;top:881px;width:850.0px;height:1px;background:#cbcbcb;"></div>
<span style="position:absolute;white-space:pre;left:66.07px;top:875.97px;font-size:10.5px;font-weight:400;line-height:1;color:#444;">6M</span>
<div style="position:absolute;left:88.5px;top:848px;width:850.0px;height:1px;background:#cbcbcb;"></div>
<span style="position:absolute;white-space:pre;left:66.07px;top:843.09px;font-size:10.5px;font-weight:400;line-height:1;color:#444;">8M</span>
<div style="position:absolute;left:88.5px;top:816px;width:850.0px;height:1px;background:#cbcbcb;"></div>
<span style="position:absolute;white-space:pre;left:60.07px;top:810.21px;font-size:10.5px;font-weight:400;line-height:1;color:#444;">10M</span>
<div style="position:absolute;left:88.5px;top:783px;width:850.0px;height:1px;background:#cbcbcb;"></div>
<span style="position:absolute;white-space:pre;left:60.07px;top:777.33px;font-size:10.5px;font-weight:400;line-height:1;color:#444;">12M</span>
<div style="position:absolute;left:88.5px;top:750px;width:850.0px;height:1px;background:#cbcbcb;"></div>
<span style="position:absolute;white-space:pre;left:60.07px;top:744.45px;font-size:10.5px;font-weight:400;line-height:1;color:#444;">14M</span>
<div style="position:absolute;left:938.0px;top:750px;width:1px;height:231px;background:#cbcbcb;"></div>
<div style="position:absolute;left:130.6px;top:960px;width:113.6px;height:20.899999999999977px;background:#fdc55e;"></div>
<div style="position:absolute;left:243.89999999999998px;top:967.6px;width:113.6px;height:13.299999999999955px;background:#9fb879;"></div>
<div style="position:absolute;left:357.2px;top:946.8px;width:113.6px;height:34.10000000000002px;background:#0094b6;"></div>
<div style="position:absolute;left:555.8px;top:912.6px;width:113.6px;height:68.29999999999995px;background:#fdc55e;"></div>
<div style="position:absolute;left:669.0999999999999px;top:846.9px;width:113.6px;height:134.0px;background:#9fb879;"></div>
<div style="position:absolute;left:782.4px;top:779.7px;width:113.6px;height:201.19999999999993px;background:#0094b6;"></div>
<div style="position:absolute;left:88px;top:749.5px;width:1px;height:235px;background:#333;"></div>
<div style="position:absolute;left:88px;top:980px;width:851px;height:1px;background:#333;"></div>
<div style="position:absolute;left:513px;top:980px;width:1px;height:5px;background:#333;"></div>
<div style="position:absolute;left:938px;top:980px;width:1px;height:5px;background:#333;"></div>
<span style="position:absolute;white-space:pre;left:191.15px;top:977.81px;font-size:11px;font-weight:400;line-height:1;color:#4d4325;transform-origin:0 0;transform:rotate(-90deg) scaleX(0.9978) translateY(-9.31px);">Cost Value</span>
<span style="position:absolute;white-space:pre;left:304.45px;top:977.80px;font-size:11px;font-weight:400;line-height:1;color:#3f4a2c;transform-origin:0 0;transform:rotate(-90deg) scaleX(1.0049) translateY(-9.31px);">Gross Profit</span>
<div style="position:absolute;left:393.85px;top:880px;width:40px;height:66.8px;overflow:hidden">
<span style="position:absolute;white-space:pre;left:23.90px;top:97.90px;font-size:11px;font-weight:700;line-height:1;color:#c8f1fb;transform-origin:0 0;transform:rotate(-90deg) scaleX(0.9481) translateY(-9.31px);-webkit-text-stroke:0.8px #2b9fbc;">Net Sales Value</span>
</div>
<div style="position:absolute;left:393.85px;top:946.8px;width:40px;height:34px;overflow:hidden">
<span style="position:absolute;white-space:pre;left:23.90px;top:31.10px;font-size:11px;font-weight:700;line-height:1;color:#f2fcff;transform-origin:0 0;transform:rotate(-90deg) scaleX(0.9481) translateY(-9.31px);-webkit-text-stroke:0.5px #8fdcf0;">Net Sales Value</span>
</div>
<span style="position:absolute;white-space:pre;left:616.35px;top:977.81px;font-size:11px;font-weight:400;line-height:1;color:#5a4a1c;transform-origin:0 0;transform:rotate(-90deg) scaleX(0.9978) translateY(-9.31px);">Cost Value</span>
<span style="position:absolute;white-space:pre;left:729.65px;top:977.80px;font-size:11px;font-weight:400;line-height:1;color:#3f4d26;transform-origin:0 0;transform:rotate(-90deg) scaleX(1.0049) translateY(-9.31px);">Gross Profit</span>
<span style="position:absolute;white-space:pre;left:842.95px;top:977.90px;font-size:11px;font-weight:700;line-height:1;color:#fff;transform-origin:0 0;transform:rotate(-90deg) scaleX(0.9481) translateY(-9.31px);">Net Sales Value</span>
<span style="position:absolute;white-space:pre;left:297.75px;top:988.11px;font-size:10.5px;font-weight:400;line-height:1;color:#444;">1</span>
<span style="position:absolute;white-space:pre;left:722.56px;top:988.11px;font-size:10.5px;font-weight:400;line-height:1;color:#444;">2</span>
<div style="position:absolute;left:35px;top:822px;width:17.5px;height:105.5px;background:#f5f6f7;border-radius:3px;"></div>
<span style="position:absolute;white-space:pre;left:48.30px;top:923.56px;font-size:10.5px;font-weight:400;line-height:1;color:#333;transform-origin:0 0;transform:rotate(-90deg) scaleX(1.0643) translateY(-8.89px);">Metric: <b>(3 selected)</b></span>
<div style="position:absolute;left:438px;top:1010px;width:98px;height:19.5px;background:#f7f8f9;border-radius:3px;"></div>
<span style="position:absolute;white-space:pre;left:442.37px;top:1015.11px;font-size:10.5px;font-weight:400;line-height:1;color:#333;transform:scaleX(1.0892);transform-origin:0 0;">Group: <b>Trnmonth</b></span>
<div style="position:absolute;left:951.5px;top:712px;width:803px;height:319.5px;background:#ffffff;"></div>
<svg style="left:963px;top:722.8px" width="12" height="12" viewBox="0 0 12 12"><path d="M0.4 0 H11.6 Q12.3 0.5 11.8 1.1 L7.5 5.8 V10.9 Q7.3 12.2 6.4 11.5 L4.6 10.1 V5.8 L0.2 1.1 Q-0.3 0.5 0.4 0 Z" fill="#546370"/></svg>
<svg style="left:990.4px;top:724.4px" width="16" height="9" viewBox="0 0 16 9">
<circle cx="1.8" cy="4.5" r="1.55" fill="#555c63"/><circle cx="14.3" cy="4.5" r="1.55" fill="#555c63"/>
<path d="M5.4 2.5 H10.6 M7.3 0.6 L5.2 2.5 L7.3 4.4" stroke="#555c63" stroke-width="1" fill="none"/>
<path d="M5 6.7 H11 M9.1 4.8 L11.2 6.7 L9.1 8.6" stroke="#555c63" stroke-width="1" fill="none"/>
</svg>
<span style="position:absolute;white-space:pre;left:1018.28px;top:721.50px;font-size:13px;font-weight:400;line-height:1;color:#444;transform:scaleX(1.0410);transform-origin:0 0;">Period-to-period Net Profit</span>
<div style="position:absolute;left:1023px;top:750px;width:723px;height:1px;background:#cbcbcb;"></div>
<span style="position:absolute;white-space:pre;left:988.12px;top:744.46px;font-size:10.5px;font-weight:400;line-height:1;color:#444;">300M</span>
<span style="position:absolute;white-space:pre;left:1008.13px;top:782.81px;font-size:10.5px;font-weight:400;line-height:1;color:#444;">0</span>
<div style="position:absolute;left:1023px;top:826px;width:723px;height:1px;background:#cbcbcb;"></div>
<span style="position:absolute;white-space:pre;left:984.63px;top:821.21px;font-size:10.5px;font-weight:400;line-height:1;color:#444;">-300M</span>
<div style="position:absolute;left:1023px;top:865px;width:723px;height:1px;background:#cbcbcb;"></div>
<span style="position:absolute;white-space:pre;left:984.63px;top:859.51px;font-size:10.5px;font-weight:400;line-height:1;color:#444;">-600M</span>
<div style="position:absolute;left:1023px;top:903px;width:723px;height:1px;background:#cbcbcb;"></div>
<span style="position:absolute;white-space:pre;left:984.63px;top:897.91px;font-size:10.5px;font-weight:400;line-height:1;color:#444;">-900M</span>
<div style="position:absolute;left:1023px;top:942px;width:723px;height:1px;background:#cbcbcb;"></div>
<span style="position:absolute;white-space:pre;left:989.11px;top:936.31px;font-size:10.5px;font-weight:400;line-height:1;color:#444;">-1.2B</span>
<div style="position:absolute;left:1023px;top:980px;width:723px;height:1px;background:#cbcbcb;"></div>
<span style="position:absolute;white-space:pre;left:989.11px;top:974.61px;font-size:10.5px;font-weight:400;line-height:1;color:#444;">-1.5B</span>
<div style="position:absolute;left:1745.5px;top:750px;width:1px;height:231px;background:#cbcbcb;"></div>
<div style="position:absolute;left:1565px;top:788.5px;width:144.8px;height:158px;background:#0094b6;"></div>
<div style="position:absolute;left:1022px;top:749.5px;width:1px;height:231.5px;background:#333;"></div>
<div style="position:absolute;left:1022px;top:788px;width:724px;height:1px;background:#333;"></div>
<div style="position:absolute;left:1384px;top:788px;width:1px;height:5px;background:#333;"></div>
<div style="position:absolute;left:1745px;top:788px;width:1px;height:5px;background:#333;"></div>
<div style="position:absolute;left:1420.6px;top:787px;width:144.4px;height:1px;background:#f9e2a8;"></div>
<div style="position:absolute;left:1100px;top:744.5px;width:600px;height:100px;overflow:hidden">
<span style="position:absolute;white-space:pre;left:34.90px;top:42.02px;font-size:11px;font-weight:400;line-height:1;color:#3d3d3d;transform-origin:0 0;transform:rotate(-90deg) scaleX(1.0219) translateY(-9.31px);">Revenue</span>
<span style="position:absolute;white-space:pre;left:177.90px;top:41.75px;font-size:11px;font-weight:700;line-height:1;color:#c8f1fb;transform-origin:0 0;transform:rotate(-90deg) scaleX(1.0230) translateY(-9.31px);-webkit-text-stroke:0.8px #2b9fbc;">Netprofit</span>
<span style="position:absolute;white-space:pre;left:396.40px;top:42.02px;font-size:11px;font-weight:400;line-height:1;color:#3d3d3d;transform-origin:0 0;transform:rotate(-90deg) scaleX(1.0219) translateY(-9.31px);">Revenue</span>
</div>
<span style="position:absolute;white-space:pre;left:1640.90px;top:836.44px;font-size:11px;font-weight:700;line-height:1;color:#fff;transform-origin:0 0;transform:rotate(-90deg) scaleX(1.0052) translateY(-9.31px);transform-origin:0 0;">Netprofit</span>
<span style="position:absolute;white-space:pre;left:1199.45px;top:988.11px;font-size:10.5px;font-weight:400;line-height:1;color:#444;">1</span>
<span style="position:absolute;white-space:pre;left:1562.26px;top:988.11px;font-size:10.5px;font-weight:400;line-height:1;color:#444;">2</span>
<div style="position:absolute;left:958.5px;top:822px;width:17.5px;height:105.5px;background:#f5f6f7;border-radius:3px;"></div>
<span style="position:absolute;white-space:pre;left:971.80px;top:923.56px;font-size:10.5px;font-weight:400;line-height:1;color:#333;transform-origin:0 0;transform:rotate(-90deg) scaleX(1.0643) translateY(-8.89px);">Metric: <b>(2 selected)</b></span>
<div style="position:absolute;left:1307px;top:1010px;width:92px;height:19.5px;background:#f7f8f9;border-radius:3px;"></div>
<span style="position:absolute;white-space:pre;left:1311.38px;top:1015.11px;font-size:10.5px;font-weight:400;line-height:1;color:#333;transform:scaleX(1.0708);transform-origin:0 0;">Group: <b>Glperiod</b></span>
</div>
</body></html>
